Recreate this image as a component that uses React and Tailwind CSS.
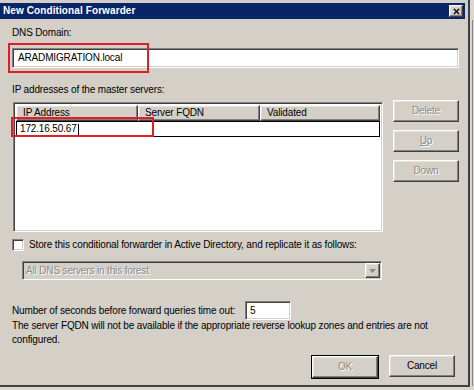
import { X } from "lucide-react";

const raised =
  "border border-t-white border-l-white border-b-[#404040] border-r-[#404040] shadow-[inset_-1px_-1px_#808080,inset_1px_1px_#e4e1dc]";
const sunken =
  "border border-t-[#808080] border-l-[#808080] border-b-white border-r-white shadow-[inset_1px_1px_#404040,inset_-1px_-1px_#d4d0c8]";
const disabledText = "text-[#8c8a85] [text-shadow:1px_1px_0_#ffffff]";

function Btn({ label, className = "" }) {
  return (
    <div
      className={`w-[66px] h-[22px] bg-[#d4d0c8] flex items-center justify-center ${raised} ${disabledText} ${className}`}
    >
      {label}
    </div>
  );
}

function App() {
  return (
    <div className="relative w-[474px] h-[390px] overflow-hidden bg-[#dad7d1] font-['Liberation_Sans',Arial,sans-serif] text-[10px] leading-[14px] tracking-[-0.15px] text-black flex">
      {/* Dialog */}
      <div className="w-[470px] h-[387px] shrink-0 bg-[#d4d0c8] border-r-2 border-b-2 border-r-[#404040] border-b-[#404040] pt-[3px] pr-[3px] flex flex-col">
        {/* Title bar */}
        <div className="h-[16px] bg-[#0a246a] flex items-center justify-between pl-[3px] pr-[2px]">
          <span className="text-white font-bold text-[10px] tracking-[0.1px]">New Conditional Forwarder</span>
          <div className={`w-[14px] h-[12px] bg-[#d4d0c8] flex items-center justify-center ${raised}`}>
            <X size={9} strokeWidth={3.5} color="#000" />
          </div>
        </div>

        {/* Body */}
        <div className="flex flex-col pl-[12px] pr-[9px]">
          <div className="mt-[7px]">DNS Domain:</div>
          <div className={`mt-[8px] h-[20px] w-[447px] bg-white flex items-center pl-[5px] ${sunken}`}>
            ARADMIGRATION.local
          </div>

          <div className="mt-[15px]">IP addresses of the master servers:</div>

          <div className="flex items-start">
            {/* List view */}
            <div className={`mt-[5px] ml-[1px] w-[370px] h-[130px] bg-white ${sunken} p-[2px] flex flex-col`}>
              <div className="flex h-[16px]">
                <div className={`w-[122px] bg-[#d4d0c8] pl-[6px] flex items-center ${raised}`}>IP Address</div>
                <div className={`w-[122px] bg-[#d4d0c8] pl-[6px] flex items-center ${raised}`}>Server FQDN</div>
                <div className={`w-[120px] bg-[#d4d0c8] pl-[6px] flex items-center ${raised}`}>Validated</div>
              </div>
              <div className="h-[16px] border border-black flex items-center pl-[3px]">
                <span>172.16.50.67</span>
                <span className="w-px h-[11px] bg-black ml-px" />
              </div>
            </div>

            {/* Side buttons */}
            <div className="ml-[10px] mt-[3px] flex flex-col gap-[8px]">
              <Btn label="Delete" />
              <Btn
                label={
                  <span>
                    <span className="underline">U</span>p
                  </span>
                }
              />
              <Btn label="Down" />
            </div>
          </div>

          {/* Checkbox row */}
          <div className="mt-[6px] flex items-center">
            <div className={`w-[12px] h-[12px] bg-white ${sunken}`} />
            <span className="ml-[5px]">
              Store this conditional forwarder in Active Directory, and replicate it as follows:
            </span>
          </div>

          {/* Dropdown */}
          <div className={`mt-[9px] ml-[10px] w-[360px] h-[19px] bg-[#d4d0c8] flex items-center justify-between ${sunken}`}>
            <span className={`pl-[3px] ${disabledText}`}>All DNS servers in this forest</span>
            <div className={`w-[15px] h-[15px] mr-[1px] bg-[#d4d0c8] flex items-center justify-center ${raised}`}>
              <svg width="7" height="4" viewBox="0 0 7 4">
                <path d="M0 0h7L3.5 4z" fill="#8c8a85" />
              </svg>
            </div>
          </div>

          {/* Timeout */}
          <div className="mt-[21px] flex items-center h-[19px]">
            <span className="w-[233px]">Number of seconds before forward queries time out:</span>
            <div className={`w-[46px] h-[19px] bg-white flex items-center pl-[4px] ${sunken}`}>5</div>
          </div>
          <p className="mt-[-1px] w-[440px]">
            The server FQDN will not be available if the appropriate reverse lookup zones and entries are not
            configured.
          </p>

          {/* OK / Cancel */}
          <div className="mt-[8px] flex justify-end gap-[10px] pr-[1px]">
            <div className="border border-black">
              <Btn label="OK" className="w-[64px] h-[20px]" />
            </div>
            <div className={`w-[66px] h-[22px] bg-[#d4d0c8] flex items-center justify-center ${raised}`}>Cancel</div>
          </div>
        </div>
      </div>

      {/* Strip behind dialog on the right */}
      <div className="ml-[2px] mt-[20px] w-px h-[366px] bg-[#8a8782]" />

      {/* Red highlight boxes */}
      <div className="absolute left-[8px] top-[43px] w-[141px] h-[30px] border-2 border-[#e11d2a]" />
      <div className="absolute left-[11px] top-[117px] w-[143px] h-[20px] border-2 border-[#e11d2a]" />
    </div>
  );
}

export default App;
